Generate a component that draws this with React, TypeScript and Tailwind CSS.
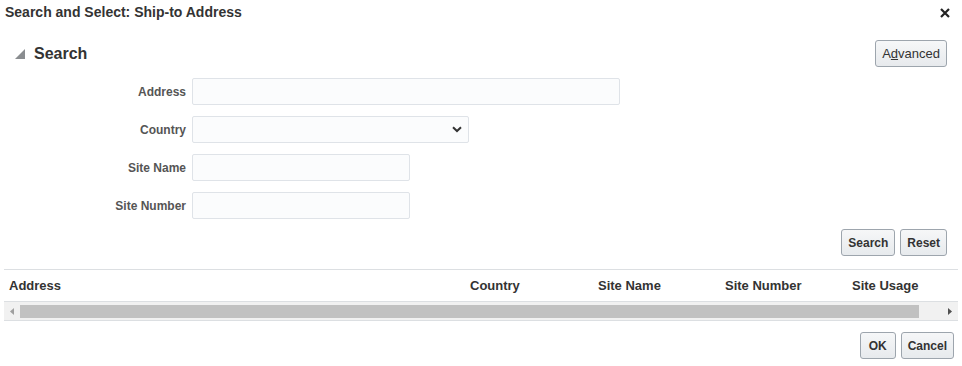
import React from 'react'

const Field = ({ label, width, select }: { label: string; width: string; select?: boolean }) => (
    <div className="flex items-center h-[27px]">
        <label className="w-[186px] text-right text-[12px] font-bold text-[#555]">{label}</label>
        <div
            className={`ml-[6px] h-[27px] ${width} border border-[#dfe3e8] bg-[#fbfcfd] rounded-[2px] flex items-center justify-end pr-[6px]`}
        >
            {select && (
                <svg width="10" height="7" viewBox="0 0 10 7">
                    <path d="M1 1.2 L5 5 L9 1.2" fill="none" stroke="#333" strokeWidth="2" />
                </svg>
            )}
        </div>
    </div>
)

const Btn = ({ children, className = '' }: { children: React.ReactNode; className?: string }) => (
    <button
        className={`h-[27px] border border-[#9da5ad] rounded-[3px] bg-gradient-to-b from-[#f6f7f8] to-[#e7eaed] text-[#333] ${className}`}
    >
        {children}
    </button>
)

export default function App() {
    return (
        <div className="w-[962px] h-[366px] bg-white font-['Liberation_Sans',Arial,sans-serif] text-[#333] overflow-hidden">
            {/* Title bar */}
            <div className="flex items-center justify-between h-[25px] pl-[5px] pr-[12px]">
                <h1 className="text-[14px] font-bold text-[#333]">Search and Select: Ship-to Address</h1>
                <svg width="10" height="10" viewBox="0 0 10 10">
                    <path d="M1 1 L9 9 M9 1 L1 9" stroke="#222" strokeWidth="2.2" />
                </svg>
            </div>

            {/* Search header */}
            <div className="flex items-center justify-between mt-[15px] pl-[15px] pr-[15px] h-[27px]">
                <div className="flex items-center gap-[9px]">
                    <svg width="10" height="10" viewBox="0 0 10 10">
                        <path d="M10 0 L10 10 L0 10 Z" fill="#8a8d90" />
                    </svg>
                    <span className="text-[16px] font-bold text-[#333]">Search</span>
                </div>
                <Btn className="px-[6px] text-[13px]">
                    A<span className="underline">d</span>vanced
                </Btn>
            </div>

            {/* Form */}
            <div className="mt-[11px] flex flex-col gap-[11px]">
                <Field label="Address" width="w-[428px]" />
                <Field label="Country" width="w-[277px]" select />
                <Field label="Site Name" width="w-[218px]" />
                <Field label="Site Number" width="w-[218px]" />
            </div>

            <div className="flex justify-end gap-[5px] mt-[10px] pr-[15px]">
                <Btn className="px-[6px] text-[12px] font-bold">Search</Btn>
                <Btn className="px-[6px] text-[12px] font-bold">Reset</Btn>
            </div>

            {/* Results table */}
            <div className="mx-[4px] mt-[13px] border-t border-[#dcdfe2]">
                <div className="grid grid-cols-[466px_128px_127px_127px_1fr] h-[32px] items-center text-[13px] font-bold text-[#333] border-b border-[#dcdfe2]">
                    <div className="pl-[5px]">Address</div>
                    <div>Country</div>
                    <div>Site Name</div>
                    <div>Site Number</div>
                    <div>Site Usage</div>
                </div>
                <div className="flex items-center h-[19px] bg-[#f1f1f1] border-b border-[#dcdfe2]">
                    <div className="w-[16px] flex justify-center">
                        <svg width="4" height="7" viewBox="0 0 4 7">
                            <path d="M4 0 L0 3.5 L4 7 Z" fill="#a0a0a0" />
                        </svg>
                    </div>
                    <div className="flex-1 h-[13px] bg-[#c1c1c1]" />
                    <div className="w-[39px] flex justify-end pr-[6px]">
                        <svg width="4" height="7" viewBox="0 0 4 7">
                            <path d="M0 0 L4 3.5 L0 7 Z" fill="#505050" />
                        </svg>
                    </div>
                </div>
            </div>

            {/* Footer */}
            <div className="flex justify-end gap-[5px] mt-[11px] pr-[8px]">
                <Btn className="px-[8px] text-[12px] font-bold">OK</Btn>
                <Btn className="px-[6px] text-[12px] font-bold">Cancel</Btn>
            </div>
        </div>
    )
}
